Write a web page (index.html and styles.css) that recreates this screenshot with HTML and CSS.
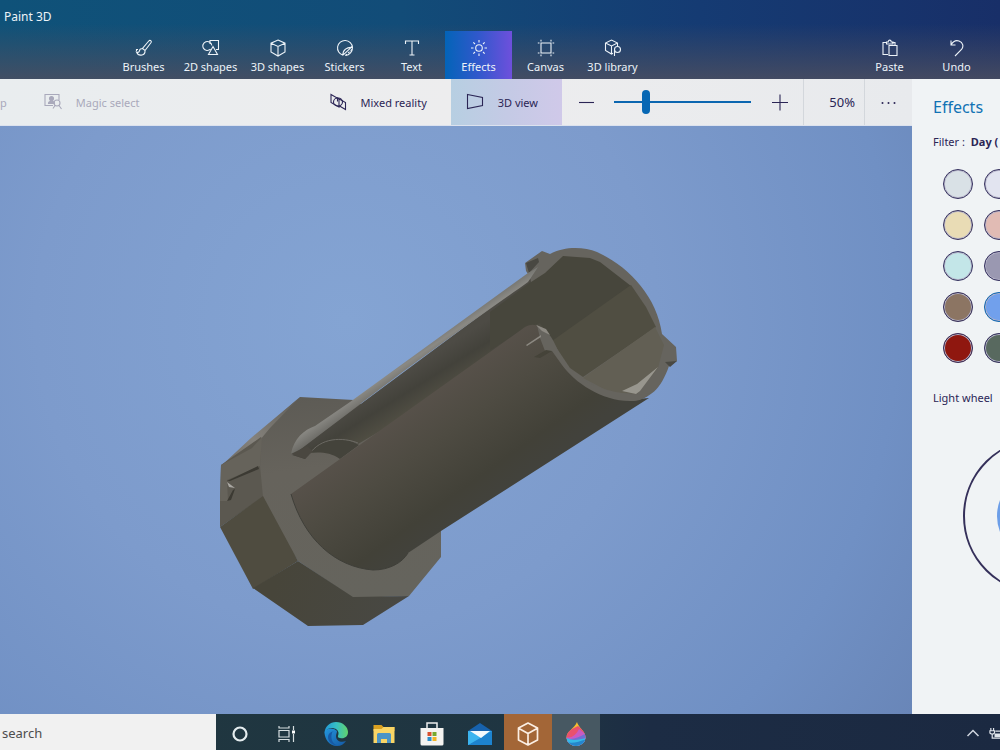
FILE: index.html
```
<!DOCTYPE html>
<html lang="en">
<head>
  <meta charset="UTF-8" />
  <meta name="viewport" content="width=device-width, initial-scale=1.0" />
  <title>Paint 3D</title>
  <link rel="stylesheet" href="styles.css">
</head>
<body>

<header class="app-header">
  <div class="title">Paint 3D</div>
  <nav class="ribbon">
    <button type="button" class="tab">
      <svg class="icon" viewBox="0 0 18 18"><path d="M15.5 1.5c1 .6 1 1.400.4 2.300L10 11.500 7.500 9.500 13.800 2c.5-.6 1.100-.8 1.700-.5zM7.500 9.500c-2 0-3 1-3.200 2.700-.2 1.400-1.300 1.300-2.800.8 1 2.500 3.300 3.500 5.500 3 2.300-.5 3.200-2.300 3-4.500M3 10.500H1.500v1.500"/></svg>
      <span>Brushes</span>
    </button>
    <button type="button" class="tab">
      <svg class="icon" viewBox="0 0 18 18"><path d="M8 5V1.500h8.500v9h-2.500M8.500 10.200A4.500 4.500 0 1 1 9.800 6.500M11 7.500l4.500 8h-9z"/></svg>
      <span>2D shapes</span>
    </button>
    <button type="button" class="tab">
      <svg class="icon" viewBox="0 0 18 18"><path d="M9 1l7 3.200v8.800l-7 4-7-4V4.200zM2 4.200l7 3.300 7-3.300M9 7.500V17"/></svg>
      <span>3D shapes</span>
    </button>
    <button type="button" class="tab">
      <svg class="icon" viewBox="0 0 18 18"><path d="M7 16.200A7.500 7.500 0 1 1 16.500 8.500M7 16.200c-.5-5 4-8.500 9.500-7.700M7 16.200l9-8.500M16.500 8.500c0 4-3 7.500-7 8"/><path stroke-dasharray="2 1.500" d="M9.500 16.500l7-6.500"/></svg>
      <span>Stickers</span>
    </button>
    <button type="button" class="tab">
      <svg class="icon" viewBox="0 0 18 18"><path d="M2.500 5V2h13v3M9 2v14M6.500 16h5"/></svg>
      <span>Text</span>
    </button>
    <button type="button" class="tab active">
      <svg class="icon" viewBox="0 0 18 18"><circle cx="9" cy="9" r="3.300"/><path d="M9 1v2.500M9 14.500V17M1 9h2.500M14.500 9H17M3.300 3.300L5 5M13 13l1.700 1.700M3.300 14.700L5 13M13 5l1.700-1.700"/></svg>
      <span>Effects</span>
    </button>
    <button type="button" class="tab">
      <svg class="icon" viewBox="0 0 18 18"><path d="M4 4h10v10H4zM4 .8v1.700M14 .8v1.700M4 15.500v1.700M14 15.500v1.700M.8 4h1.700M.8 14h1.700M15.500 4h1.700M15.500 14h1.700"/></svg>
      <span>Canvas</span>
    </button>
    <button type="button" class="tab">
      <svg class="icon" viewBox="0 0 18 18"><path d="M13.500 7V4L7.500 1 1.500 4v7.500l6 3.500 1.500-.8M1.500 4l6 3 6-3M7.500 7v8M10.500 17v-6"/><circle cx="13.500" cy="10.500" r="3"/></svg>
      <span>3D library</span>
    </button>
    <div class="spacer"></div>
    <button type="button" class="tab">
      <svg class="icon" viewBox="0 0 18 18"><path d="M7 15.500H2v-12h3.500M11 3.500h3V6M5.500 5V3h1.700c0-2.500 3-2.500 3 0H12v2zM8 6.500h8v10H8z"/></svg>
      <span>Paste</span>
    </button>
    <button type="button" class="tab">
      <svg class="icon" viewBox="0 0 18 18"><path d="M3 1.500V6h4.500M3 6c2-3.500 5-5 8-4 4 1.300 5 5.500 2.500 8.500L7 17"/></svg>
      <span>Undo</span>
    </button>
  </nav>
</header>

<main class="main">
  <section class="workspace">
    <div class="toolbar">
      <button type="button" class="tool crop" disabled>p</button>
      <button type="button" class="tool" disabled>
        <svg class="icon" viewBox="0 0 18 18"><path d="M9 12.500H1v-11h14V7"/><circle cx="7.500" cy="5.500" r="2" fill="currentColor"/><path d="M4.500 10.500c0-3 6-3 6 0z" fill="currentColor"/><circle cx="13" cy="10" r="3"/><path d="M15 12.500l2.500 3.500M11 12.500L9 15.500"/></svg>
        <span>Magic select</span>
      </button>
      <div class="spacer"></div>
      <button type="button" class="tool">
        <svg class="icon" viewBox="0 0 18 18"><path d="M2 1.500l8 4.500v8L2 9.500zM8.500 8.500V5l8 4.500v7l-6-3.500"/><ellipse cx="9" cy="9" rx="4.500" ry="4"/></svg>
        <span>Mixed reality</span>
      </button>
      <button type="button" class="tool selected">
        <svg class="icon" viewBox="0 0 18 18"><path d="M1.500 1.500l15 3v8l-15 3z"/></svg>
        <span>3D view</span>
      </button>
      <div class="zoom">
        <button type="button" class="zoom-btn" aria-label="Zoom out">
          <svg class="icon" viewBox="0 0 18 18"><path d="M2 9.500h15"/></svg>
        </button>
        <input type="range" class="zoom-slider" min="0" max="100" value="22" aria-label="Zoom" />
        <button type="button" class="zoom-btn" aria-label="Zoom in">
          <svg class="icon" viewBox="0 0 18 18"><path d="M1 9.500h16M9 1.500v16"/></svg>
        </button>
      </div>
      <div class="zoom-value">50%</div>
      <button type="button" class="more" aria-label="More options">
        <svg class="icon" viewBox="0 0 18 18"><g fill="currentColor" stroke="none"><circle cx="2.500" cy="10" r="1"/><circle cx="8.500" cy="10" r="1"/><circle cx="14.500" cy="10" r="1"/></g></svg>
      </button>
    </div>

    <div class="canvas">
      <svg class="model" viewBox="0 126 912 588" role="img" aria-label="3D model">
        <defs>
          <linearGradient id="body" gradientUnits="userSpaceOnUse" x1="390" y1="420" x2="461" y2="520">
            <stop offset="0" stop-color="#57514a"/>
            <stop offset=".35" stop-color="#4e4b42"/>
            <stop offset=".8" stop-color="#424138"/>
            <stop offset="1" stop-color="#42423c"/>
          </linearGradient>
          <linearGradient id="face" gradientUnits="userSpaceOnUse" x1="310" y1="395" x2="340" y2="600">
            <stop offset="0" stop-color="#5d5b55"/>
            <stop offset=".35" stop-color="#66635c"/>
            <stop offset="1" stop-color="#65645d"/>
          </linearGradient>
          <linearGradient id="edge" gradientUnits="userSpaceOnUse" x1="400" y1="357" x2="412" y2="375">
            <stop offset="0" stop-color="#747470"/>
            <stop offset=".4" stop-color="#8a8984"/>
            <stop offset="1" stop-color="#6b6a65"/>
          </linearGradient>
          <linearGradient id="wall" gradientUnits="userSpaceOnUse" x1="404" y1="372" x2="424" y2="404">
            <stop offset="0" stop-color="#4d4b45"/>
            <stop offset=".5" stop-color="#43423b"/>
            <stop offset="1" stop-color="#504e43"/>
          </linearGradient>
          <linearGradient id="bevel" gradientUnits="userSpaceOnUse" x1="222" y1="465" x2="300" y2="400">
            <stop offset="0" stop-color="#6b6862"/>
            <stop offset=".4" stop-color="#85827c"/>
            <stop offset="1" stop-color="#5e5c57"/>
          </linearGradient>
          <linearGradient id="under" gradientUnits="userSpaceOnUse" x1="280" y1="570" x2="400" y2="610">
            <stop offset="0" stop-color="#47453a"/>
            <stop offset="1" stop-color="#484843"/>
          </linearGradient>
        </defs>

        <!-- nut -->
        <path fill="url(#face)" d="M300 397L354 400 420 440 441 530V557L409 596 353 598 298 561 258 500 222 466z"/>
        <path fill="url(#bevel)" d="M221 466L251 438 300 397 270 428 260 440z"/>
        <path fill="#5b5850" d="M221 465L261 437 260 466 263 497 220 527V500z"/>
        <path fill="#66635b" d="M221 465L252 448 262 437 260 466 227 480 228 501 220 501z"/>
        <path fill="#4f4c40" d="M220 527L263 496 298 561 253 589z"/>
        <path fill="url(#under)" d="M253 588L298 561 353 597 409 596 363 625 308 626z"/>
        <path fill="#3c3a33" d="M227 481L258 466 259 469 230 481zM233 490L227 501 231 500 235 489z"/>
        <path fill="#aaa8a3" d="M227 482L235 488 229 487z"/>

        <!-- inside of the tube -->
        <path fill="url(#wall)" d="M292 455L528 280 563 256 590 300 545 335 358 444C345 435 320 441 305 459z"/>
        <path fill="#44433b" d="M308 453C320 436 345 436 359 445L340 459C330 452 320 452 308 453z"/>
        <path fill="none" stroke="#6b6963" d="M309 455C320 437 343 437 358 443"/>

        <!-- open end, rim first and the inner facets over it -->
        <path fill="#66645e" d="M526 271L525 263 542 251 550 254C565 246 584 247 597 252C628 266 657 296 662 334L676 347 677 361 669 366C661 389 650 399 632 401C603 402 575 383 562 365L545 332 560 270 532 286 530 277z"/>
        <path fill="#47463c" d="M528 284L545 273 563 256 590 258 600 262 631 286 553 342 540 323 527 327 490 350 490 312z"/>
        <path fill="#504e42" d="M631 285L646 307 656 327 583 377 570 368 552 341z"/>
        <path fill="#625f54" d="M655 327L664 345 658 368 637 394 610 392 583 378z"/>
        <path fill="#98968e" d="M658 367L640 391 636 394 622 391 637 384z"/>
        <path fill="#494842" d="M526 263L538 258 539 262 529 273zM665 362L677 361 670 367z"/>

        <!-- long edge -->
        <path fill="url(#edge)" d="M291 454C294 438 304 430 315 426L350 402 528 273 538 267 528 282C500 302 450 337 380 389L293 455z"/>
        <path fill="#4a4740" d="M291 454L307 446 313 451 305 459z"/>

        <!-- outer body -->
        <path fill="url(#body)" d="M291 494L525 327C536 321 541 327 545 338L562 363C578 383 602 397 637 399L649 398 441 531 408 553C402 563 389 570 373 570C335 567 304 539 291 494z"/>
        <path fill="none" stroke="#3f3f39" d="M291 494C304 539 335 567 373 570C389 570 402 563 408 553"/>

        <!-- near lip -->
        <path fill="#66645e" d="M537 325C550 330 555 344 560 355C574 381 603 392 637 395L650 393C643 400 638 401 632 401C603 402 575 383 562 365L552 351 545 351 540 338z"/>
        <path fill="#8c8982" d="M536 325L546 329 550 335 542 331zM526 345L541 335 541 337 527 346z"/>
        <path fill="#454339" d="M534 357L546 350 552 351 540 358z"/>
      </svg>
    </div>
  </section>

  <aside class="panel">
    <h2>Effects</h2>
    <p class="filter">Filter : <strong>Day (</strong></p>
    <div class="swatches">
      <button type="button" class="swatch mist" aria-label="Mist"></button>
      <button type="button" class="swatch lilac" aria-label="Lilac"></button>
      <button type="button" class="swatch sand" aria-label="Sand"></button>
      <button type="button" class="swatch rose" aria-label="Rose"></button>
      <button type="button" class="swatch aqua" aria-label="Aqua"></button>
      <button type="button" class="swatch dusk" aria-label="Dusk"></button>
      <button type="button" class="swatch earth" aria-label="Earth"></button>
      <button type="button" class="swatch day" aria-label="Day"></button>
      <button type="button" class="swatch red" aria-label="Red"></button>
      <button type="button" class="swatch forest" aria-label="Forest"></button>
    </div>
    <h3>Light wheel</h3>
    <div class="wheel"><div class="wheel-light"></div></div>
  </aside>
</main>

<footer class="taskbar">
  <div class="search">search</div>
  <button type="button" class="task" aria-label="Cortana">
    <svg viewBox="0 0 24 24"><circle cx="12" cy="12" r="6.500" fill="none" stroke="#e4ecee" stroke-width="2.200"/></svg>
  </button>
  <button type="button" class="task" aria-label="Task view">
    <svg viewBox="0 0 24 24"><path fill="none" stroke="#d5dddf" stroke-width="1.200" d="M3 4v2h10V4M3 20v-2.500h10V20M3 8.500h10v6.500H3zM17.500 4v4M17.500 12v8"/><path fill="#fff" d="M16 8.500h3v3h-3z"/></svg>
  </button>
  <button type="button" class="task" aria-label="Edge">
    <svg viewBox="0 0 24 24">
      <defs>
        <linearGradient id="edge-top" x1="0" x2="1"><stop offset="0" stop-color="#2298d8"/><stop offset=".5" stop-color="#36bfc5"/><stop offset="1" stop-color="#62d36c"/></linearGradient>
        <linearGradient id="edge-low" x1="0" x2="1" y1="0" y2="1"><stop offset="0" stop-color="#2496dc"/><stop offset="1" stop-color="#1458a4"/></linearGradient>
      </defs>
      <path fill="url(#edge-low)" d="M.5 11C1 17 5 24 13 24c4 0 7-2 9-5-5 2-10 0-10-5 0-2 1-3 1-5C9 5 1 6 .5 11z"/>
      <path fill="url(#edge-top)" d="M.5 11C1 4 6 0 12 0c7 0 12 5 12 10 0 5-4 7-8 6-3-.5-2-2-1.500-4C15 8 11 6 8 6 4 6 1.500 8 .5 11z"/>
      <path fill="#175aa5" d="M8 11c-2 6 1 12 7 12.700C9 24 4 20 4 15c0-3 2-5 6-6-1 .5-1.600 1-2 2z"/>
    </svg>
  </button>
  <button type="button" class="task" aria-label="File Explorer">
    <svg viewBox="0 0 24 24"><path fill="#d9a021" d="M1.500 3h8l2 2h11v4h-21z"/><path fill="#f9d565" d="M1.500 7h8l2-2h11v16h-21z"/><path fill="#4b94c6" d="M5 21v-8.500Q5 11 6.500 11h11q1.500 0 1.500 1.500V21h-4v-4H9v4z"/></svg>
  </button>
  <button type="button" class="task" aria-label="Store">
    <svg viewBox="0 0 24 24"><path fill="none" stroke="#eee" stroke-width="1.500" d="M7 7V1h10v6"/><path fill="#f4f3f1" d="M.5 6h23v16q0 1.500-1.500 1.500H2Q.5 23.500.5 22z"/><path fill="#d9502e" d="M7.500 10h4v4h-4z"/><path fill="#76a92f" d="M12.500 10h4v4h-4z"/><path fill="#2d8fcb" d="M7.500 15h4v4h-4z"/><path fill="#f1b526" d="M12.500 15h4v4h-4z"/></svg>
  </button>
  <button type="button" class="task" aria-label="Mail">
    <svg viewBox="0 0 24 24"><path fill="#1762ad" d="M0 9L12 1l12 8v4H0z"/><path fill="#37a6e5" d="M0 9h24v14H0z"/><path fill="#1d83cf" d="M0 23L14 14l10-5v14z"/><path fill="#3bb4ef" d="M0 9v14L14 15z"/><path fill="#f3f9fc" d="M2 9h20l-9 7z"/></svg>
  </button>
  <button type="button" class="task viewer" aria-label="3D Viewer">
    <svg viewBox="0 0 24 24"><path fill="none" stroke="#fbeee3" stroke-width="1.700" stroke-linejoin="round" d="M12 1l9.500 5v12L12 23l-9.500-5V6zM3 6.500l9 5 9-5M12 11.500V23"/></svg>
  </button>
  <button type="button" class="task current" aria-label="Paint 3D">
    <svg viewBox="0 0 24 24">
      <defs><clipPath id="drop"><path d="M13 0c1 5 8.500 9 8.500 15.500a9.500 8.500 0 0 1-19 0C2.500 9 10 7 13 0z"/></clipPath></defs>
      <g clip-path="url(#drop)"><path fill="#f6bd2e" d="M0 0h24v24H0z"/><path fill="#e8516e" d="M0 11L14 4l10 8v12H0z"/><path fill="#c65bc5" d="M0 15c8 2 12-2 15-8l9 7v10H0z"/><path fill="#7070d3" d="M0 16c9 3 16-1 24-6v14H0z"/><path fill="#36b9e8" d="M0 14c7 6 15 4 24 1v9H0z"/><path fill="#2586cd" d="M0 19c8 4 15 0 24-2v7H0z"/></g>
    </svg>
  </button>
  <div class="tray">
    <svg viewBox="0 0 14 14" class="chevron"><path fill="none" stroke="#cfd5de" stroke-width="1.500" d="M1.500 10L7 4.500l5.500 5.500"/></svg>
    <svg viewBox="0 0 12 14" class="battery"><path fill="none" stroke="#dfe4ea" stroke-width="1.300" d="M2 1v3M5 1v3M1 4h5v2.500q-2.500 2.500-5 0zM3.500 8v4H12M7 4.500h5"/><path fill="#dfe4ea" d="M6 7h6v4H6z"/></svg>
  </div>
</footer>

</body>
</html>
```
FILE: styles.css
```
* {
  box-sizing: border-box;
}

body {
  font-family: "Noto Sans", "Open Sans", sans-serif;
  font-size: 11px;
  color: #2b2555;
  margin: 0;
  height: 100vh;
  display: flex;
  flex-direction: column;
  overflow: hidden;
}

button {
  font: inherit;
  color: inherit;
  background: none;
  border: none;
  padding: 0;
}

h2, h3, p {
  margin: 0;
}

.icon {
  width: 18px;
  height: 18px;
  flex: none;
  fill: none;
  stroke: currentColor;
  stroke-width: 1.1;
}

.spacer {
  flex: 1;
}

/* Header */
.app-header {
  color: #edf3f8;
  background:
    linear-gradient(to bottom, rgba(75, 78, 96, 0) 30%, rgba(75, 78, 96, 0.85)),
    linear-gradient(to right, #0f5279, #124c78 40%, #153b73 70%, #182f68);
}

.title {
  height: 31px;
  padding: 0 4px;
  font-size: 12px;
  line-height: 34px;
}

.ribbon {
  display: flex;
  padding: 0 10px 0 110px;
}

.tab {
  width: 67px;
  height: 48px;
  padding-top: 4px;
  display: flex;
  flex-direction: column;
  align-items: center;
  justify-content: center;
  gap: 2px;
  line-height: 16px;
  white-space: nowrap;
}

.tab.active {
  background: linear-gradient(to right, #0364b8, #3158cc 50%, #6e50dc);
}

/* Workspace */
.main {
  flex: 1;
  min-height: 0;
  display: flex;
}

.workspace {
  flex: 1;
  min-width: 0;
  display: flex;
  flex-direction: column;
}

.toolbar {
  display: flex;
  height: 47px;
  background: linear-gradient(to right, #e9edef, #ededee 50%, #e8eaed);
  border-bottom: 1px solid #dce2ee;
}

.tool {
  display: flex;
  align-items: center;
  gap: 14px;
  padding: 0 24px 0 15px;
  white-space: nowrap;
}

.tool:disabled {
  color: #a9a9bb;
}

.tool.crop {
  padding: 0 22px 0 0;
}

.tool.selected {
  background: linear-gradient(to right, #b7cfe2, #c4cae5 50%, #d0c9e9);
}

.zoom {
  display: flex;
  align-items: center;
  gap: 5px;
}

.zoom-btn {
  width: 47px;
  height: 46px;
  display: flex;
  align-items: center;
  justify-content: center;
}

.zoom-slider {
  appearance: none;
  width: 137px;
  height: 24px;
  margin: 0;
  background: linear-gradient(#0b66b0, #0b66b0) center / 100% 2px no-repeat;
}

.zoom-slider::-webkit-slider-thumb {
  appearance: none;
  width: 8px;
  height: 24px;
  border-radius: 4px;
  background: #0767b4;
}

.zoom-value {
  width: 62px;
  padding-right: 9px;
  border-left: 1px solid #d3d7dc;
  border-right: 1px solid #d3d7dc;
  font-size: 13px;
  line-height: 47px;
  text-align: right;
}

.more {
  width: 47px;
  display: flex;
  align-items: center;
  justify-content: center;
}

.canvas {
  flex: 1;
  min-height: 0;
  background: radial-gradient(circle at 38% 33%, #84a4d3, #7d9bcc 45%, #7090c4 80%, #6986b8);
}

.model {
  display: block;
  width: 100%;
  height: 100%;
}

/* Effects panel */
.panel {
  width: 88px;
  padding: 15px 0 0 21px;
  overflow: hidden;
  background: #f0f3f5;
  white-space: nowrap;
}

.panel h2 {
  font-size: 16px;
  font-weight: normal;
  line-height: 26px;
  color: #1272b4;
}

.filter {
  margin-top: 14px;
  line-height: 16px;
}

.filter strong {
  margin-left: 3px;
}

.swatches {
  display: grid;
  grid-template-columns: 30px 30px;
  gap: 11px;
  padding: 19px 0 0 10px;
}

.swatch {
  width: 30px;
  height: 30px;
  border: 1px solid #35305e;
  border-radius: 50%;
  box-shadow: inset 0 0 0 1px #b3b1c6;
}

.mist { background: #d9e1e6; }
.lilac { background: #e2e4f0; }
.sand { background: #e9dcb5; }
.rose { background: #e1bbb4; }
.aqua { background: #c3e6e8; }
.dusk { background: #9a98b1; }
.earth { background: #8c7563; }
.day { background: #71a0ec; border-color: #0f65ac; }
.red { background: #8f170f; }
.forest { background: #58695f; }

.panel h3 {
  margin-top: 27px;
  font-size: 11px;
  font-weight: normal;
  line-height: 16px;
}

.wheel {
  width: 156px;
  height: 156px;
  margin: 32px 0 0 30px;
  display: flex;
  align-items: center;
  justify-content: center;
  border: 2px solid #35305a;
  border-radius: 50%;
}

.wheel-light {
  width: 88px;
  height: 88px;
  border-radius: 50%;
  background: #6c9ee8;
}

/* Taskbar */
.taskbar {
  flex: none;
  height: 36px;
  display: flex;
  background: linear-gradient(to right, #20373f, #1f3542 55%, #1c2c44 65%, #1b2941);
}

.search {
  width: 216px;
  padding-left: 2px;
  background: #f1f1f1;
  color: #4d4d4d;
  font-size: 13px;
  line-height: 38px;
}

.task {
  width: 48px;
  display: flex;
  align-items: center;
  justify-content: center;
  padding-top: 3px;
}

.task svg {
  width: 24px;
  height: 24px;
}

.task.viewer {
  background: #a36637;
}

.task.current {
  background: #475862;
}

.tray {
  margin-left: auto;
  display: flex;
  align-items: center;
  gap: 9px;
  padding-top: 2px;
}

.chevron {
  width: 14px;
  height: 14px;
}

.battery {
  width: 11px;
  height: 13px;
}
```
